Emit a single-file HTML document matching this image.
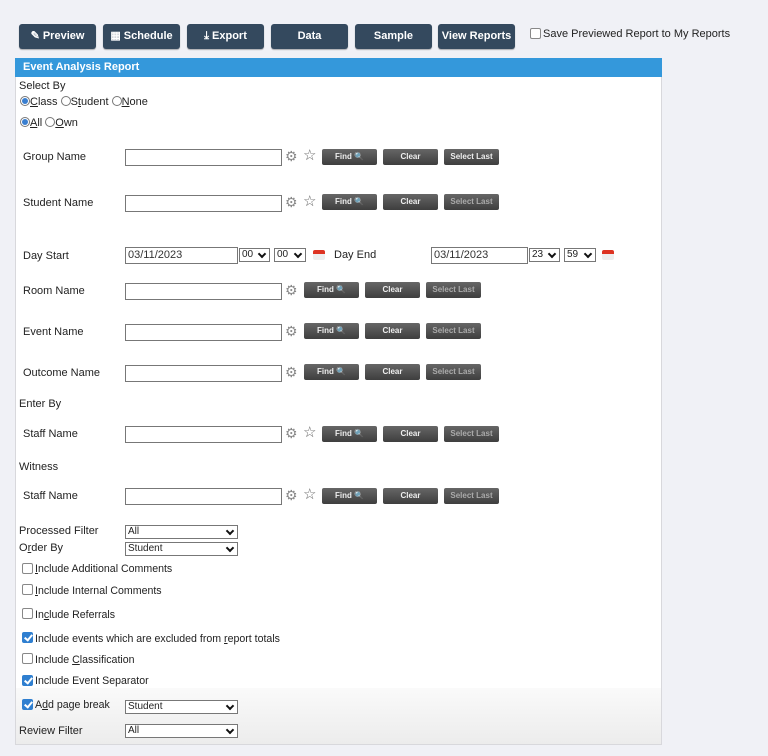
<!DOCTYPE html>
<html><head><meta charset="utf-8"><style>
*{box-sizing:border-box}
body{margin:0;width:768px;height:756px;background:#f0f1f6;font-family:"Liberation Sans",Arial,sans-serif;font-size:11px;color:#222;position:relative;overflow:hidden}
.a{position:absolute}
.tb{position:absolute;top:24px;height:25px;width:77px;background:#34495e;border-radius:3px;color:#fff;font-size:11px;font-weight:bold;text-align:center;line-height:25px;box-shadow:0 1px 1px rgba(0,0,0,.3)}
.panel{position:absolute;left:15px;top:58px;width:647px;height:687px;background:#fff;border:1px solid #d8d8dc}
.hdr{position:absolute;left:15px;top:58px;width:647px;height:19px;background:#3498db;color:#fff;font-weight:bold;font-size:11px;line-height:19px;padding-left:8px}
.band{position:absolute;left:16px;top:688px;width:645px;height:56px;background:linear-gradient(#fafafa,#ececec)}
.inp{position:absolute;height:17px;border:1px solid #777;background:#fff;font-size:11px;padding:1px 2px;color:#333}
.sel{position:absolute;height:14px;border:1px solid #777;background:#fff;font-size:10px;line-height:12px;padding-left:2px;color:#222}
.sel:after{content:"";position:absolute;right:4px;top:2px;width:4px;height:4px;border-right:2px solid #111;border-bottom:2px solid #111;transform:rotate(45deg)}
.bt{position:absolute;height:16px;width:55px;background:linear-gradient(#666,#3e3e3e);border-radius:2px;color:#eee;font-size:8px;font-weight:bold;text-align:center;line-height:16px}
.bt.d{color:#aaa}
.bt i{font-style:normal;color:#f0a030}
.lb{position:absolute;font-size:11px}
.ck{font-size:10.6px}
.cb{position:absolute;width:11px;height:11px;border:1px solid #888;border-radius:2px;background:#fff}
.cb.on{background:#2f7fd0;border-color:#2f7fd0}
.cb.on:after{content:"";position:absolute;left:3px;top:0px;width:3px;height:6px;border-right:2px solid #fff;border-bottom:2px solid #fff;transform:rotate(40deg)}
.rd{display:inline-block;width:10px;height:10px;border:1px solid #777;border-radius:50%;vertical-align:-1px;background:#fff;position:relative}
.rd.on:after{content:"";position:absolute;left:1px;top:1px;width:6px;height:6px;border-radius:50%;background:#3a7fd0}
.cal{position:absolute;width:12px;height:10px;background:#eee;border-top:4px solid #d32;border-radius:2px}
</style></head><body>
<div class="tb" style="left:19px">&#9998; Preview</div>
<div class="tb" style="left:103px">&#9638; Schedule</div>
<div class="tb" style="left:187px">&#10515; Export</div>
<div class="tb" style="left:271px">Data</div>
<div class="tb" style="left:355px">Sample</div>
<div class="tb" style="left:438px">View Reports</div>
<div class="cb" style="left:530px;top:28px"></div>
<div class="lb" style="left:543px;top:28px">Save Previewed Report to My Reports</div>

<div class="panel"></div>
<div class="hdr">Event Analysis Report</div>
<div class="band"></div>

<div class="lb" style="left:19px;top:80px">Select By</div>
<div class="lb" style="left:20px;top:96px"><span class="rd on"></span><u>C</u>lass <span class="rd"></span>S<u>t</u>udent <span class="rd"></span><u>N</u>one</div>
<div class="lb" style="left:20px;top:117px"><span class="rd on"></span><u>A</u>ll <span class="rd"></span><u>O</u>wn</div>

<div class="lb" style="left:23px;top:151px">Group Name</div>
<div class="inp" style="left:125px;top:149px;width:157px"></div>
<div class="lb" style="left:285px;top:148px;font-size:14px;color:#888">&#9881;</div>
<div class="lb" style="left:303px;top:146px;font-size:15px;color:#666">&#9734;</div>
<div class="bt" style="left:322px;top:149px">Find <i>&#128269;</i></div>
<div class="bt" style="left:383px;top:149px">Clear</div>
<div class="bt" style="left:444px;top:149px">Select Last</div>

<div class="lb" style="left:23px;top:197px">Student Name</div>
<div class="inp" style="left:125px;top:195px;width:157px"></div>
<div class="lb" style="left:285px;top:194px;font-size:14px;color:#888">&#9881;</div>
<div class="lb" style="left:303px;top:192px;font-size:15px;color:#666">&#9734;</div>
<div class="bt" style="left:322px;top:194px">Find <i>&#128269;</i></div>
<div class="bt" style="left:383px;top:194px">Clear</div>
<div class="bt d" style="left:444px;top:194px">Select Last</div>

<div class="lb" style="left:23px;top:250px">Day Start</div>
<div class="inp" style="left:125px;top:247px;width:113px">03/11/2023</div>
<div class="sel" style="left:239px;top:248px;width:31px">00</div>
<div class="sel" style="left:274px;top:248px;width:32px">00</div>
<div class="cal" style="left:313px;top:250px"></div>
<div class="lb" style="left:334px;top:249px">Day End</div>
<div class="inp" style="left:431px;top:247px;width:97px">03/11/2023</div>
<div class="sel" style="left:529px;top:248px;width:31px">23</div>
<div class="sel" style="left:564px;top:248px;width:32px">59</div>
<div class="cal" style="left:602px;top:250px"></div>

<div class="lb" style="left:23px;top:285px">Room Name</div>
<div class="inp" style="left:125px;top:283px;width:157px"></div>
<div class="lb" style="left:285px;top:282px;font-size:14px;color:#888">&#9881;</div>
<div class="bt" style="left:304px;top:282px">Find <i>&#128269;</i></div>
<div class="bt" style="left:365px;top:282px">Clear</div>
<div class="bt d" style="left:426px;top:282px">Select Last</div>

<div class="lb" style="left:23px;top:326px">Event Name</div>
<div class="inp" style="left:125px;top:324px;width:157px"></div>
<div class="lb" style="left:285px;top:323px;font-size:14px;color:#888">&#9881;</div>
<div class="bt" style="left:304px;top:323px">Find <i>&#128269;</i></div>
<div class="bt" style="left:365px;top:323px">Clear</div>
<div class="bt d" style="left:426px;top:323px">Select Last</div>

<div class="lb" style="left:23px;top:367px">Outcome Name</div>
<div class="inp" style="left:125px;top:365px;width:157px"></div>
<div class="lb" style="left:285px;top:364px;font-size:14px;color:#888">&#9881;</div>
<div class="bt" style="left:304px;top:364px">Find <i>&#128269;</i></div>
<div class="bt" style="left:365px;top:364px">Clear</div>
<div class="bt d" style="left:426px;top:364px">Select Last</div>

<div class="lb" style="left:19px;top:398px">Enter By</div>
<div class="lb" style="left:23px;top:428px">Staff Name</div>
<div class="inp" style="left:125px;top:426px;width:157px"></div>
<div class="lb" style="left:285px;top:425px;font-size:14px;color:#888">&#9881;</div>
<div class="lb" style="left:303px;top:423px;font-size:15px;color:#666">&#9734;</div>
<div class="bt" style="left:322px;top:426px">Find <i>&#128269;</i></div>
<div class="bt" style="left:383px;top:426px">Clear</div>
<div class="bt d" style="left:444px;top:426px">Select Last</div>

<div class="lb" style="left:19px;top:461px">Witness</div>
<div class="lb" style="left:23px;top:490px">Staff Name</div>
<div class="inp" style="left:125px;top:488px;width:157px"></div>
<div class="lb" style="left:285px;top:487px;font-size:14px;color:#888">&#9881;</div>
<div class="lb" style="left:303px;top:485px;font-size:15px;color:#666">&#9734;</div>
<div class="bt" style="left:322px;top:488px">Find <i>&#128269;</i></div>
<div class="bt" style="left:383px;top:488px">Clear</div>
<div class="bt d" style="left:444px;top:488px">Select Last</div>

<div class="lb" style="left:19px;top:525px">Processed Filter</div>
<div class="sel" style="left:125px;top:525px;width:113px">All</div>
<div class="lb" style="left:19px;top:542px">O<u>r</u>der By</div>
<div class="sel" style="left:125px;top:542px;width:113px">Student</div>

<div class="cb" style="left:22px;top:563px"></div><div class="lb ck" style="left:35px;top:563px"><u>I</u>nclude Additional Comments</div>
<div class="cb" style="left:22px;top:584px"></div><div class="lb ck" style="left:35px;top:585px"><u>I</u>nclude Internal Comments</div>
<div class="cb" style="left:22px;top:608px"></div><div class="lb ck" style="left:35px;top:609px">In<u>c</u>lude Referrals</div>
<div class="cb on" style="left:22px;top:632px"></div><div class="lb ck" style="left:35px;top:633px">Include events which are excluded from <u>r</u>eport totals</div>
<div class="cb" style="left:22px;top:653px"></div><div class="lb ck" style="left:35px;top:654px">Include <u>C</u>lassification</div>
<div class="cb on" style="left:22px;top:675px"></div><div class="lb ck" style="left:35px;top:675px">Include Event Separator</div>
<div class="cb on" style="left:22px;top:699px"></div><div class="lb ck" style="left:35px;top:699px">A<u>d</u>d page break</div>
<div class="sel" style="left:125px;top:700px;width:113px">Student</div>
<div class="lb" style="left:19px;top:725px">Review Filter</div>
<div class="sel" style="left:125px;top:724px;width:113px">All</div>
</body></html>
